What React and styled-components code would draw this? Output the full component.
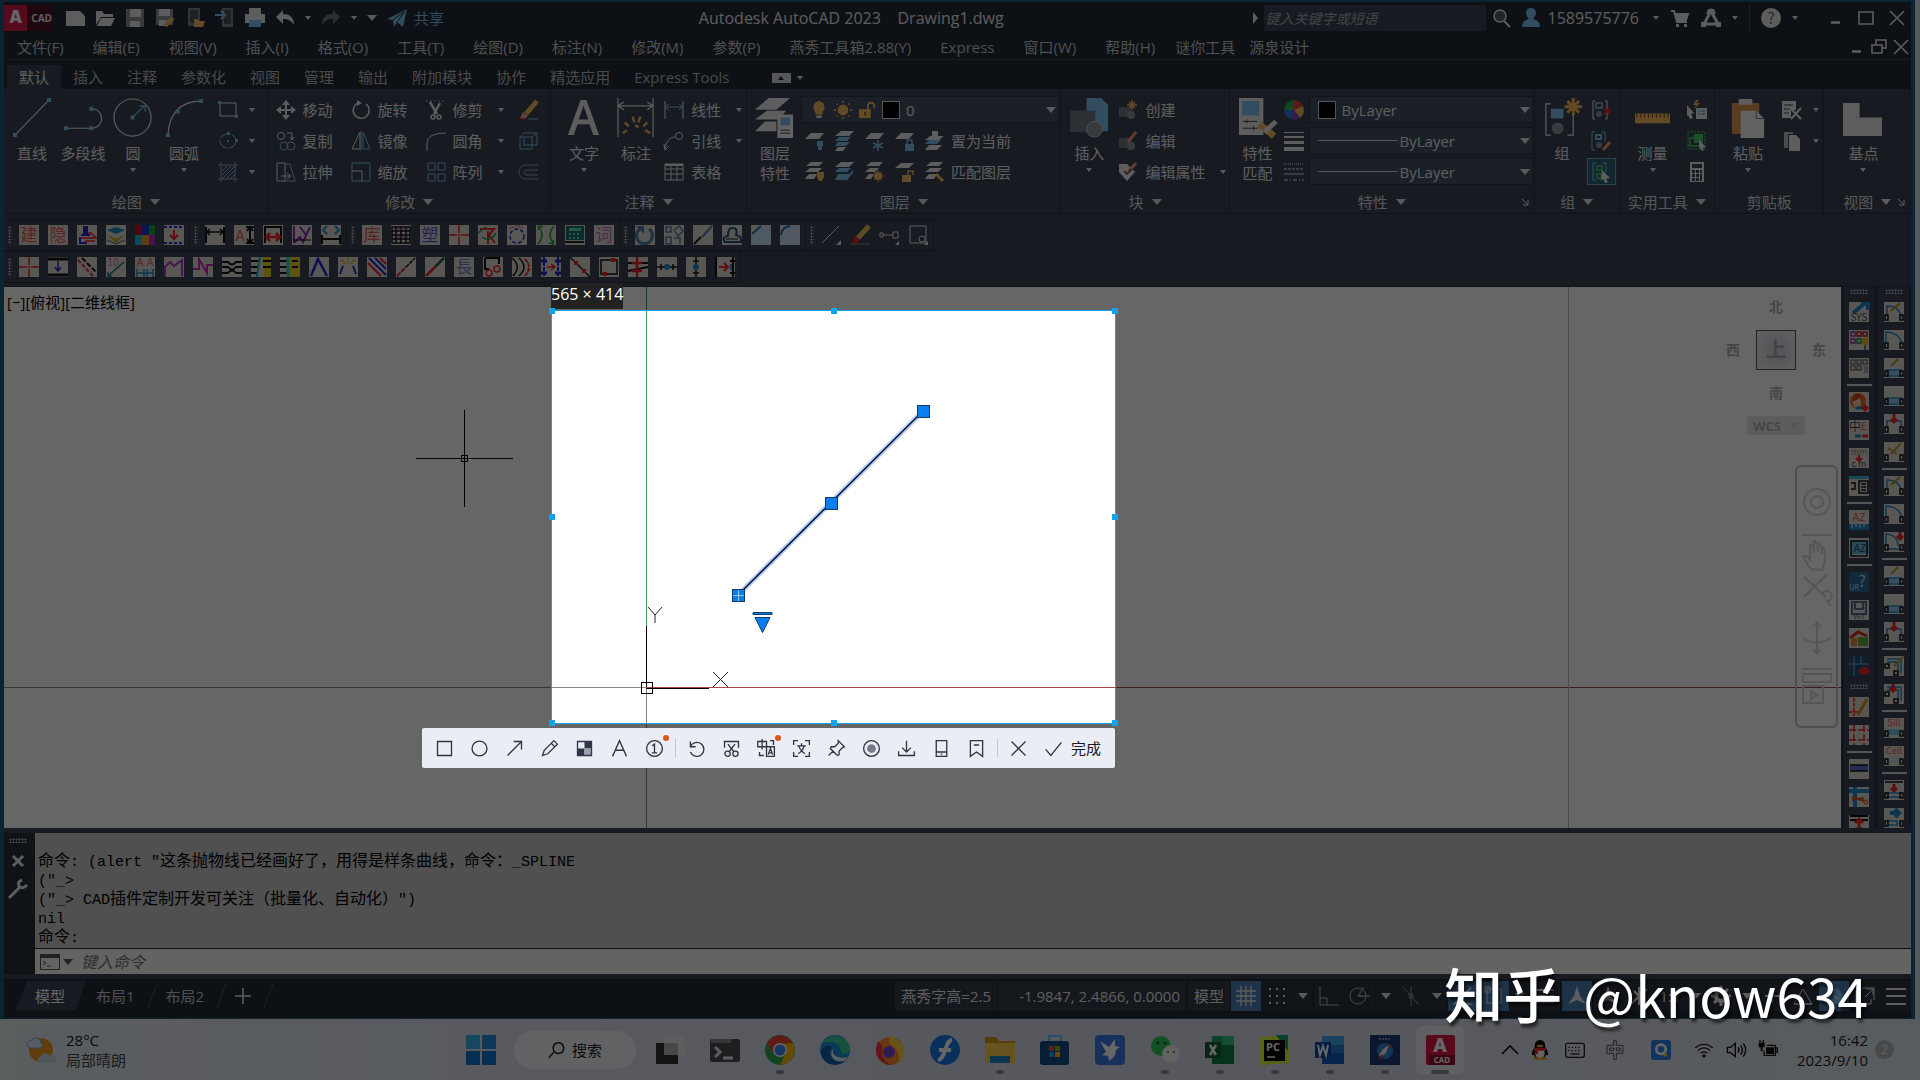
import React from "react";
import styled, { createGlobalStyle, css } from "styled-components";

const W = "#e8e8e8";
const B = "#7cc0ee";
const Y = "#f5b95a";
const R = "#ee2222";
const K = "#111111";
const N = "#2222cc";
const T = "#1e88c8";

// short path helper, most icons are just a few strokes
const P = ({ d, c = W, w = 1, f = "none", dash }) => (
    <path d={d} stroke={c} strokeWidth={w} fill={f} strokeDasharray={dash} />
);
const F = ({ d, c = W }) => <path d={d} fill={c} />;
const Glyph = ({ children, c = R, s = 17, x = 10, y = 16 }) => (
    <text x={x} y={y} fill={c} fillOpacity="0.75" fontSize={s} textAnchor="middle" fontFamily="'Noto Sans CJK SC', sans-serif">{children}</text>
);

const sheet = "M7 2h13l-5 6H1z";

// 20 x 20
const small = {
    newFile: <F d="M1 3h14l5 5v10H1z" />,
    open: <><F d="M1 17V3h6l2 3h9v3H6z" /><F d="M6 10h14l-4 8H2z" /></>,
    save: <><F c="#8d949c" d="M1 1h18v18H1z" /><F d="M5 1h11v8H5zM5 13h10v6H5z" /></>,
    saveAs: <><F c="#8d949c" d="M1 1h17v16H1z" /><F d="M4 1h11v7H4zM4 12h8v6H4z" /><P c={Y} w={4} d="M10 18l8-8" /></>,
    fromMobile: <><F c="#7a8087" d="M3 0h12v18H3z" /><F c="#4d535b" d="M5 2h8v13H5z" /><F c={Y} d="M9 11h4l1 2h6l-2 6H9z" /></>,
    toMobile: <><F c="#7a8087" d="M7 0h11v19H7z" /><F c="#4d535b" d="M9 2h7v14H9z" /><P c={B} w={2} d="M0 7h9M6 3l4 4-4 4" /></>,
    print: <><F d="M4 0h12v6H4zM0 6h20v9H0z" /><F c={B} d="M4 12h12v7H4z" /></>,
    undo: <F d="M8 2v4c6 0 11 3 11 11-3-5-6-6-11-6v5L1 9z" />,
    redo: <F c="#6c747f" d="M12 2v4C6 6 1 9 1 17c3-5 6-6 11-6v5l7-7z" />,
    plane: <><F c={B} d="M0 11L20 1l-4 18-6-5-3 5-1-7z" /><P c="#222933" d="M6 12L18 3l-8 11" /></>,
    search: <><circle cx="8" cy="8" r="6" fill="#555c66" stroke={W} strokeWidth="1.5" /><P w={2} d="M12 13l6 6" /></>,
    person: <F c={B} d="M10 0c4 0 5 3 5 5s-2 5-3 6c4 1 7 3 7 8H1c0-5 3-7 7-8-1-1-3-4-3-6s1-5 5-5z" />,
    cart: <><P w={2} d="M1 3h3l3 11h10M5 6h13l-2 6H7" /><F d="M6 16h3v3H6zM14 16h3v3h-3zM5 6h13l-2 5H7z" /></>,
    autodeskA: <><P w={3} d="M10 3L3 16h14z" /><F d="M7 1h6l2 5H5zM0 14h5v5H0zM15 14h5v5h-5z" /></>,
    help: <><circle cx="10" cy="10" r="10" fill={W} /><Glyph c="#333a45" s={16}>?</Glyph></>,

    rect: <><P d="M2 3h16v13H2z" /><F c={B} d="M0 1h3v3H0zM17 15h3v3h-3z" /></>,
    ellipse: <><ellipse cx="10" cy="10" rx="8" ry="7" fill="none" stroke={B} strokeDasharray="11 2" /><F c={B} d="M9 9h2v2H9zM9 1h3v3H9zM17 8h3v3h-3z" /></>,
    hatch: <><P d="M3 0v20M17 0v20M0 3h20M0 17h20" c="#9aa3ad" /><P c={B} d="M4 9l5-5M4 13l9-9M4 17L17 4M8 17l9-9M12 17l5-5" /></>,
    move: <><P w={2} d="M10 3v14M3 10h14" /><F d="M10 0l4 5H6zM10 20l4-5H6zM0 10l5-4v8zM20 10l-5-4v8z" /></>,
    rotate: <><P w={1.5} d="M7 3a8 8 0 1 0 8 1" /><F d="M6 0l5 3-5 3z" /></>,
    trim: <><P c={B} d="M0 1h20" dash="2 2" /><P w={2.5} d="M4 2l7 12M14 3L8 14" /><circle cx="7" cy="17" r="2" fill="none" stroke={W} strokeWidth="1.5" /><circle cx="13" cy="17" r="2" fill="none" stroke={W} strokeWidth="1.5" /></>,
    erase: <><P c={Y} w={5} d="M19 1L8 14" /><F c="#f2a0a0" d="M5 12l5 4-3 3-5-1z" /><P c={R} d="M0 19h7" /><P c={B} d="M10 19h10" /></>,
    copy: <><circle cx="5" cy="5" r="3.5" fill="none" stroke={W} /><P d="M11 2h5v6M14 6l2 3 2-3" /><circle cx="8" cy="15" r="4" fill="none" stroke={B} /><circle cx="15" cy="15" r="4" fill="none" stroke={B} /></>,
    mirror: <><P d="M9 1v17H1z" /><P c={B} d="M12 1v17h7zM10 0v20" /></>,
    fillet: <P d="M1 20V12Q1 2 20 2" />,
    explode: <><P c={B} d="M2 6h12v12H2zM6 2h13v12h-5M2 6l4-4M14 6l5-4M6 6v8h8" /></>,
    stretch: <><P d="M1 1h8v18H1z" /><P c={B} d="M10 2h4l5 17H9" /><P d="M5 14h9M11 11l4 3-4 3" /></>,
    scale: <><P c={B} d="M1 19V1h18v18z" /><P d="M1 9h10v10" /></>,
    array: <P c={B} d="M2 1h7v7H2zM12 1h7v7h-7zM2 12h7v7H2zM12 12h7v7h-7z" />,
    offset: <P c="#8ea6bd" d="M20 3H8a7 7 0 0 0 0 14h12M20 8H9a2 2 0 0 0 0 5h11" />,
    linear: <><P d="M1 1v18M19 1v18" /><P c={B} d="M1 7h18M5 4L1 7l4 3M15 4l4 3-4 3" /></>,
    leader: <><circle cx="15" cy="5" r="3.5" fill="none" stroke={W} /><P d="M11 6Q3 6 1 18M0 13l1 6 4-4" /></>,
    table: <><P d="M1 2h18v16H1zM1 7h18M1 12h18M7 2v16M13 2v16" /><P w={2} d="M1 3h18" /></>,
    bulb: <><F c={Y} d="M10 0a7 7 0 0 1 4 12v3H6v-3a7 7 0 0 1 4-12z" /><F d="M7 16h6v3H7z" /></>,
    sun: <><circle cx="10" cy="10" r="6" fill={Y} /><P c={Y} w={2} d="M10 0v2M10 18v2M0 10h2M18 10h2M3 3l1 1M16 16l1 1M17 3l-1 1M4 16l-1 1" /></>,
    unlock: <><F c={Y} d="M1 9h13v10H1z" /><P c={Y} w={2} d="M11 9V4a4 4 0 0 1 7 0v4" /><F c="#7a5420" d="M7 12h2v4H7z" /></>,
    layOff: <><F d={sheet} /><F c={B} d="M13 10h6v5h-1v4h-4v-4h-1z" /></>,
    layIso: <><F d="M7 0h13l-5 5H1z" /><F c={B} d="M5 6h12l-4 4H1zM4 11h12l-4 4H1z" /><F d="M4 16h8l-3 4H1z" /></>,
    layFreeze: <><F d={sheet} /><P c={B} w={1.5} d="M14 9v11M9 12l10 5M19 12L9 17" /></>,
    layLock: <><F d={sheet} /><F c={B} d="M11 13h9v7h-9z" /><P c={B} w={1.5} d="M13 13V9h5v4" /></>,
    layCurrent: <><F d="M8 0h6v5h6l-5 4H1l5-4h2z" /><F c={B} d="M5 9h12l-4 4H1z" /><F d="M5 14h13l-5 5H1z" /></>,
    layOn: <><F d="M7 0h12l-4 4H2zM6 6h12l-4 4H1zM5 12h8l-3 5H1z" /><F c={Y} d="M13 10h7v5l-2 4h-3l-2-4z" /></>,
    layUniso: <><F d="M7 0h13l-5 5H1z" /><F c={B} d="M5 6h12l-4 4H1zM4 12h12l-4 6H1z" /><P c={B} w={2} d="M12 18l7-9" /></>,
    layThaw: <><F d="M7 0h12l-4 4H2zM6 6h9l-4 4H1zM5 12h5l-3 5H1z" /><circle cx="14" cy="14" r="4" fill={Y} /><P c={Y} d="M14 8v12M8 14h12M10 10l8 8M18 10l-8 8" /></>,
    layUnlock: <><F d="M7 1h13l-5 5H1z" /><F c={Y} d="M8 13h9v7H8z" /><P c={Y} w={1.5} d="M14 13V9h5v4" /></>,
    layMatch: <><F d="M7 0h12l-4 4H2zM6 6h12l-4 4H1zM5 12h8l-3 5H1z" /><P c={Y} w={3} d="M12 12l7 7" /></>,
    blkNew: <><F c="#6f7781" d="M1 7h12v10H1z" /><circle cx="13" cy="15" r="4" fill="#8d949c" /><P c={Y} w={1.5} d="M14 0v10M9 5h10M11 2l6 6M17 2l-6 6" /></>,
    blkEdit: <><F c="#6f7781" d="M1 7h12v10H1z" /><circle cx="13" cy="15" r="4" fill="#8d949c" /><P c="#f09a70" w={3} d="M10 11l8-10" /></>,
    attEdit: <><F d="M1 2h8l8 8-8 9-8-9z" /><P c="#f09a70" w={3} d="M10 10l8-9" /><P c="#444" w={1.5} d="M6 9l3 3 5-5" /></>,
    wheel: <><F c="#e8442e" d="M10 10V0a10 10 0 0 1 9 6z" /><F c={Y} d="M10 10l9-4a10 10 0 0 1-3 12z" /><F c="#8b44c8" d="M10 10l6 8a10 10 0 0 1-9 1z" /><F c="#2e7be0" d="M10 10L7 19a10 10 0 0 1-7-9z" /><F c="#2fae56" d="M10 10H0A10 10 0 0 1 10 0z" /></>,
    weights: <F d="M0 1h20v1H0zM0 5h20v2H0zM0 10h20v3H0zM0 16h20v4H0z" />,
    types: <><P d="M0 2h20" dash="1 1" /><P d="M0 7h20" dash="3 1" /><P d="M0 12h20" /><P d="M0 18h20" dash="4 2 1 2" /></>,
    ungroup: <><P d="M4 1H2v18h2M14 1h2v18h-2" /><P c={B} w={1.5} d="M5 3h6v5H5z" /><circle cx="8" cy="14" r="3" fill="#8d949c" /><P c={R} w={2} d="M13 8l6 6M19 8l-6 6" /></>,
    groupEdit: <><P c={B} d="M4 1H1v18h3M11 1h3v10" /><P c={B} w={2} d="M5 4h5v4H5z" /><circle cx="8" cy="14" r="3" fill="#8d949c" /><P c="#f09a70" w={3} d="M12 19l7-8" /></>,
    groupSel: <><P c={B} d="M5 1H2v17h3M12 1h3v9" /><P c="#3fca62" w={1.5} d="M6 4h5v4H6z" /><circle cx="8" cy="14" r="2.5" fill="none" stroke="#3fca62" strokeWidth="1.5" /><F d="M11 8l8 8-4 1 2 3-3 1-2-4-2 2z" /></>,
    quickSel: <><F d="M0 5l7 8-3 1 2 4-3 1-2-4-1 1zM9 8h11v11H9z" /><F c={Y} d="M9 0l-3 5h3l-2 4 6-6H9l3-3z" /><P c={T} d="M11 11h2M14 11h4M11 14h2M14 14h4" /></>,
    selAll: <><P c="#3fca62" d="M1 1h17v17H1z" dash="2 1" /><P c="#3fca62" w={1.5} d="M3 7h10v8H3z" /><F c="#3fca62" d="M7 3h9v9H7z" /><F d="M12 9l7 7-3 1 1 3-3-1-2-3z" /></>,
    calc: <><F d="M3 0h14v20H3z" /><F c="#3b4453" d="M5 2h10v4H5zM5 8h3v3H5zM9 8h3v3H9zM13 8h2v3h-2zM5 12h3v3H5zM9 12h3v3H9zM13 12h2v7h-2zM5 16h3v3H5zM9 16h3v3H9z" /></>,
    cut: <><F d="M0 1h14v9H9v8H0z" /><P c="#3b4453" d="M2 5h9M2 9h6M2 13h5" /><P w={2} d="M8 8l11 11M19 8L9 19" /></>,
    copyClip: <><F c="#b9bdc2" d="M2 1h9v16H2z" /><P c="#3b4453" d="M6.5 17V3.500h8" /><F d="M7 4h7l4 4v12H7z" /></>,
};

// 20 x 20 drawings placed on a pale tile
const tile = {
    jian: <Glyph>建</Glyph>,
    yin: <Glyph>隐</Glyph>,
    ding: <><F c={N} d="M6 1h5v8H6zM4 9h9v2H4z" /><P c={R} w={1.5} d="M2 13h17l-5-5h-3M8 16h10" /><P c={N} w={2} d="M3 12v6h7" /></>,
    layers: <><F c={T} d="M1 5l9-3 9 3-9 4z" /><F c="#c9a800" d="M1 10l9 4 9-4-9 8z" /><P c="#555" d="M1 15l9 4 9-4" /></>,
    colors: <><F c="#d41111" d="M0 0h7v10H0z" /><F c="#1638d8" d="M7 0h7v10H7z" /><F c="#12a822" d="M14 0h6v10h-6z" /><F c="#18c4d8" d="M0 10h7v10H0z" /><F c="#e89a28" d="M7 10h7v10H7z" /><F c="#c322c8" d="M14 10h6v10h-6z" /></>,
    dimDown: <><P c={N} w={2} d="M0 2h20M0 18h20" dash="3 2" /><P c={R} w={2} d="M10 5v9M6 10l4 4 4-4" /></>,
    dimH: <><P c={K} w={2} d="M1 2v16M19 2v16" /><P c={K} w={1.5} d="M1 7h18M5 4L2 7l3 3M15 4l3 3-3 3" /></>,
    dimA: <><Glyph x={6} s={15}>A</Glyph><P c={K} w={2} d="M12 2h8M12 18h8M16 3v14M13 6l3-4 3 4M13 14l3 4 3-4" /></>,
    dimR: <><P c={K} w={2} d="M1 2h18M2 2v16M18 2v16" /><P c={R} w={2.5} d="M3 12h14M7 8l-4 4 4 4M13 8l4 4-4 4" /></>,
    dimV: <><P c="#9122b8" w={2} d="M2 1v17M2 18l6-6 3 5 7-15M8 2l6 8" /><P c={K} d="M1 15h18" /></>,
    dimB: <><P c={T} w={2} d="M6 1L2 5l4 4M14 1l4 4-4 4" /><P c={K} w={2} d="M1 10v9M19 10v9M1 14h18" /></>,
    ku: <Glyph>库</Glyph>,
    grid: <><P c={K} w={1.5} d="M1 2h18v16H1zM1 6h18M1 10h18M1 14h18M5 2v16M10 2v16M15 2v16" /><P c="#a32bb4" d="M3 4h14M3 12h14" /></>,
    su: <Glyph c={N}>塑</Glyph>,
    cross: <><P c={R} w={1.5} d="M0 10h20M10 0v20" dash="8 1 2 1" /></>,
    pins: <><P c={R} w={2} d="M2 4h14l-5 6 6 8M10 6v13" /><P c="#2f8b57" w={1.5} d="M0 8l8-6M4 12q8 6 14-4" /></>,
    arcs: <><circle cx="10" cy="11" r="7" fill="none" stroke={N} strokeWidth="1.5" strokeDasharray="4 2" /><P c={R} d="M3 4q7-6 14 0" dash="2 1" /></>,
    swap: <P c="#22a030" w={1.5} d="M2 1q8 9 0 18M18 1q-8 9 0 18M2 5l1-4 4 1M18 15l-1 4-4-1" />,
    calcT: <><F c="#146f62" d="M1 1h18v14H1z" /><F c="#5fd6c1" d="M4 3h12v3H4z" /><P c="#5fd6c1" w={2} d="M4 9h12M4 13h12" dash="2 2" /><F c="#222" d="M0 16h19v2H0z" /></>,
    ci: <Glyph c="#c832c8">词</Glyph>,
    rot: <><P c="#4a7da8" w={3} d="M5 4a8 8 0 1 0 9 0" /><F c="#4a7da8" d="M1 1h8v8z" /></>,
    quad: <><P c="#4a7da8" w={1.5} d="M2 2h5v5H2zM10 5l5-4 4 5-5 5zM2 12h5v7H2zM10 13h6v6" /></>,
    slash: <><P c={K} w={2} d="M1 19l7-7" /><P c="#4a7da8" w={2} d="M9 12L19 1" /></>,
    cloud: <><P c="#1c4f82" w={2} d="M3 17q-4-5 3-6 0-9 5-8 5 0 3 7 6 1 5 7z" /><P c={K} d="M4 14h12" /></>,
    corner: <><F c="#c9ddf2" d="M1 20V9q2-7 9-8h9v19z" /><P c="#1c6fb4" w={2} d="M1 10Q2 2 10 1" /></>,
    corner2: <><F c="#c9ddf2" d="M1 20V9l9-8h9v19z" /><P c="#1c6fb4" w={2} d="M1 9L10 1" /></>,

    bars: <><P c={K} w={3} d="M0 2h20M0 18h20" /><P c={N} w={1.5} d="M10 4v10M7 10l3 4 3-4" /></>,
    dash2: <><P c={R} w={2} d="M1 3l15 16" dash="4 2" /><P c={K} w={2} d="M5 1l14 14" dash="5 2" /></>,
    ten: <><Glyph c="#e02ad0" s={10} x={7} y={9}>10</Glyph><P c="#18786e" w={1.5} d="M2 19L18 5M2 15v4h4" /></>,
    aa: <><Glyph s={11} x={5} y={9}>A</Glyph><Glyph s={11} x={15} y={9}>A</Glyph><P c={T} w={1.5} d="M2 20v-8M9 20v-8M12 20v-8M18 20v-8M2 16h16" /></>,
    peak: <P c="#b032c8" w={2} d="M1 20V10l5-5 4 4 8-6v16" />,
    zig: <P c="#d022b8" w={2} d="M0 12h6V2l8 14V8h6" />,
    waves: <P c={K} w={2} d="M0 5h6q4 5 8 0h6M0 10h6q4 5 8 0h6M0 16h6q4-5 8 0h6" />,
    yell: <><F c="#e8d020" d="M11 0h9v20h-7z" /><P c={K} w={2} d="M0 4h9M0 10h8M0 16h7M12 4h8M12 10h8" /><P c="#26b6d6" w={2} d="M9 0L6 20" /></>,
    cyan: <><F c="#e8d020" d="M10 0h10v20H8z" /><P c={K} w={2} d="M0 4h9M0 10h8M0 16h7M12 4h6M12 10h6" /><P c="#22c8d8" w={3} d="M8 0v20" /></>,
    chev: <P c={N} w={2.5} d="M2 19L9 2l9 17" />,
    rays: <><P c={N} w={2} d="M2 17l3-8M18 17l-3-8" /><P c="#e4b80a" w={2} d="M10 1v5M4 3l3 4M16 3l-3 4" dash="2 1" /></>,
    tri: <><P c={N} w={2} d="M2 1l17 17M8 1l11 11" /><P c={R} w={2} d="M1 6l13 13M13 1l6 6" /></>,
    rk: <><P c={R} w={2} d="M1 19l9-9" dash="5 1" /><P c={K} w={1.5} d="M10 10l9-9" dash="4 1" /></>,
    rk2: <><P c={R} w={2.5} d="M1 19l9-9" /><P c="#205c38" w={2.5} d="M10 10l9-9" /></>,
    chang: <Glyph c="#4a58b8">長</Glyph>,
    hook: <><P c={K} w={2} d="M2 1h14v6M2 1v11h4" /><circle cx="14" cy="12" r="3" fill="none" stroke={R} strokeWidth="1.5" /><circle cx="6" cy="16" r="3" fill="none" stroke={R} strokeWidth="1.5" /></>,
    arc3: <><P c={K} w={1.5} d="M0 1q10 8 1 18M7 1q10 9 0 18" /><P c={R} w={2} d="M13 2q8 8 0 17" dash="4 1" /></>,
    walls: <><P c={N} w={2} d="M3 0v20M17 0v20" dash="4 1" /><P c={N} w={3} d="M0 4h6M0 16h6M14 4h6M14 16h6" /><P c={R} w={1.5} d="M6 10h7M10 7l4 3-4 3" /></>,
    back: <><P c={K} w={1.5} d="M0 0l20 20" /><F c={R} d="M4 4h4v4H4zM12 12h4v4h-4z" /></>,
    box: <><P c={K} w={1.5} d="M2 3h16v14H2z" /><F c={R} d="M12 1h4v4h-4zM4 15h4v4H4z" /></>,
    hash: <><P c={K} w={2} d="M0 6h20M0 14l20-4" /><P c={R} w={2.5} d="M9 0v20M4 6h10M4 14h10" /></>,
    midH: <><P c={K} w={1.5} d="M0 10h20M4 7v6M16 7v6" /><circle cx="10" cy="10" r="3" fill={T} /></>,
    midV: <><P c={K} w={1.5} d="M10 0v20M7 4h6M7 16h6" /><circle cx="10" cy="10" r="3" fill={T} /></>,
    wallTo: <><P c={K} w={2} d="M1 0v20M18 0v20M15 4h5M15 16h5" /><P c={R} w={2} d="M4 10h8M9 6l4 4-4 4" /><P c={T} w={2} d="M16 7v6" /></>,

    sys: <><P c={T} w={4} d="M4 11L15 2M12 2h7v6" /><Glyph c={K} s={10} y={19}>SYS</Glyph></>,
    cells: <><P c="#8a3ab0" w={1.5} d="M2 2h4v4H2zM2 9h4v4H2z" /><P c="#b02030" w={1.5} d="M8 2h4v4H8zM14 2h4v4h-4z" /><P c="#2a8a50" w={1.5} d="M8 9h4v4H8z" /><F c="#e6b41a" d="M13 8h6v7h-5z" /><P c={K} d="M16 15v5" /></>,
    cells2: <><P c="#777" w={1.5} d="M2 2h4v4H2zM2 8h4v4H2zM8 2h4v4H8zM14 2h4v4h-4zM8 8h4v4H8z" /><F c="#9aa" d="M14 8h5v7h-4z" /></>,
    face: <><circle cx="9" cy="9" r="8" fill="#e66a2a" /><ellipse cx="8" cy="11" rx="4" ry="5" fill="#f6d3b0" /><F c="#c8401a" d="M4 9q5 0 6-5 3 2 2 6 3-6-3-8-6 0-5 7z" /><P c={T} w={3} d="M7 16h6" /><P c={R} w={3} d="M13 16h5M15 13l3 3-3 3" /></>,
    zhongE: <><Glyph c={K} s={12} x={6} y={11}>中</Glyph><Glyph s={11} x={15} y={10}>E</Glyph><P c={T} w={3} d="M6 16h6" /><P c={R} w={3} d="M13 16h6" /></>,
    mmcm: <><Glyph c="#665" s={9} y={7}>mm</Glyph><Glyph c={K} s={9} y={19}>c m</Glyph><P c={R} w={2} d="M10 7v6M7 10l3 3 3-3" /></>,
    doc: <><F c="#38b6e0" d="M0 0h20v3H0z" /><P c={K} w={1.5} d="M10 5h9v12h-9zM12 8h5M12 11h5M12 14h5M2 7h4v6H2" /></>,
    az: <><Glyph s={11} y={11}>AZ</Glyph><F c={T} d="M0 14h20v6H0z" /><P c="#fff" d="M3 14v4M7 14v3M11 14v4M15 14v3" /></>,
    az2: <><F c="#5fbbe4" d="M2 2h18v14H2z" /><P c={K} w={1.5} d="M2 18h16V3H2z" /><Glyph c={K} s={10} x={11} y={14}>AZ</Glyph></>,
    ask: <><F c="#2a6894" d="M0 0h20v20H0z" /><Glyph c="#fff" s={16} x={13} y={15}>?</Glyph><Glyph c="#fff" s={7} x={5} y={18}>UR</Glyph></>,
    disk: <><P c="#4a6d92" w={2} d="M3 2h14v12H3zM6 2v7h8V2" /><Glyph c="#24405f" s={8} y={19}>Ver</Glyph></>,
    roof: <><P c="#d0301c" w={3} d="M1 10l8-6 9 4" /><F c="#5da73a" d="M9 9h10v9H9z" /><F c="#e08a42" d="M2 10h6v8H2z" /></>,
    plan: <><F c="#274d70" d="M0 0h20v20H0z" /><P c="#7fb0da" d="M5 0v20M0 8h20M12 0v8" /><F c={R} d="M12 11h6v8h-6zM10 13h10v4H10z" /></>,
    crossP: <><P c={R} w={1.5} d="M5 1v18M0 15h10" dash="4 1" /><P c="#c9981a" w={3} d="M9 18L18 2" /></>,
    cross4: <P c={R} w={1.5} d="M5 0v20M15 0v20M0 5h20M0 15h20" dash="7 2" />,
    band: <><F c="#5a6cd0" d="M1 6h18v6H1z" /><P c={K} w={1.5} d="M1 6h18M1 12h18" /></>,
    scis: <><P c={T} w={4} d="M0 4h20M6 0v20" /><P c="#d4501c" w={2} d="M3 13l12-2M3 10l12 4" /><circle cx="17" cy="15" r="2" fill="none" stroke="#d4501c" /></>,
    upDown: <><P c={K} w={2} d="M1 1h18M1 5h18" /><P c={R} w={3} d="M10 4v12M6 8l4-4 4 4M6 13l4 4 4-4" /></>,
};

const feet = <><P c={K} w={1.5} d="M1 13h3v5H1zM16 13h3v5h-3z" /></>;
const dock = {
    doorWand: <><P c={T} w={1.5} d="M3 14V4q12 0 14 10" /><P c="#b8901a" w={2} d="M7 9l9-8" />{feet}</>,
    door: <><P c={T} w={1.5} d="M2 14V2q14 1 16 12" />{feet}</>,
    winWand: <><F c="#8cc4e8" d="M2 13h16v4H2z" /><P c={T} w={1.5} d="M2 12h16M2 18h16" /><P c="#b8901a" w={2} d="M7 8l7-7" />{feet}</>,
    win: <><F c="#8cc4e8" d="M2 13h16v4H2z" /><P c={T} w={1.5} d="M2 12h16M2 18h16" />{feet}</>,
    bayRed: <><P c={T} w={1.5} d="M3 14V7h14v7" /><P c={R} w={3} d="M10 0v6M7 5l3 3 3-3" />{feet}</>,
    open: <><P c="#b8901a" w={2} d="M7 12l10-11M4 6l9 6" />{feet}</>,
    doorRed: <><P c={T} w={1.5} d="M2 14V2q12 1 12 12M4 17h12" /><P c={R} w={3} d="M16 0v5M13 4l3 3 3-3" />{feet}</>,
    bent: <><P c={T} w={1.5} d="M3 3h14v14M3 6h11v11" /><P c="#b8901a" w={2} d="M10 10l9-9" /><P c={K} w={1.5} d="M1 8h4v4H1zM10 15h4v4h-4z" /></>,
    bentRed: <><P c={T} w={1.5} d="M3 3h14v14M3 6h11v11" /><P c={R} w={3} d="M9 0v6M6 4l3 3 3-3" /><P c={K} w={1.5} d="M1 8h4v4H1zM10 15h4v4h-4z" /></>,
    sill: <><Glyph s={9} y={8}>Sill</Glyph><F c="#6cc2de" d="M5 11h10v6H5z" />{feet}</>,
    ceil: <><Glyph s={9} y={8}>Ceil</Glyph><F c="#bcd8dc" d="M5 11h10v6H5z" />{feet}</>,
    winRed: <><P c={K} w={1.5} d="M1 2h18" /><P c={R} w={3} d="M10 4v6M7 8l3 3 3-3" /><P c={T} w={1.5} d="M2 13h16M2 17h16" />{feet}</>,
    winNext: <><P c={T} w={4} d="M6 5h7M11 1l4 4-4 4" /><P c={T} w={1.5} d="M4 13h9v4H4" />{feet}</>,
};

// 40 x 40
const large = {
    line: <><P d="M3 38L38 2" w={1.2} /><F c={B} d="M1 36h4v4H1zM36 0h4v4h-4z" /></>,
    pline: <><P d="M3 31h26c14 0 14-20 0-20" w={1.2} /><F c={B} d="M1 29h4v4H1zM27 29h4v4h-4zM27 9h4v4h-4z" /></>,
    circle: <><circle cx="20" cy="20" r="19" fill="none" stroke={W} strokeWidth="1.2" /><P c={B} d="M20 20L32 8M27 8h6v6" w={1.2} /><F c={B} d="M18 18h4v4h-4z" /></>,
    arc: <><P d="M4 38Q6 4 38 3" w={1.2} /><F c={B} d="M2 36h4v4H2zM12 12h4v4h-4zM36 1h4v4h-4z" /></>,
    text: <F d="M17 2h6l13 36h-6l-4-11H14l-4 11H4zM20 8l-5 14h10z" />,
    dim: <><P d="M2 0v40M38 0v40M2 8h36M8 4L2 8l6 4M32 4l6 4-6 4" w={1.2} /><P c={Y} w={2.5} d="M7 36l4-3M9 25l4 4M17 19l2 6M25 19l-2 6M32 25l-4 4M35 36l-5-3M20 28l3 2" /></>,
    layerProps: <><F d="M14 0h22L22 12H0zM12 13h20l-8 9H0zM10 24h12v10H0z" /><F c="#f4f4f4" d="M23 17h16v24H23z" /><F c={B} d="M26 20h10v8H26z" /><P c="#444" d="M26 33h10M26 36h10" /></>,
    insert: <><F c={B} d="M18 0h15l7 7v27H18z" /><F c="#6f7781" d="M1 13h26v22H1z" /><circle cx="26" cy="32" r="8" fill="#8d949c" stroke="#c5c9ce" /></>,
    matchProps: <><F d="M1 0h25v38H1z" /><F c={B} d="M4 3h18v15H4z" /><P c="#444" d="M5 24h15M5 31h15M9 22v4M16 29v4" /><P c={Y} w={7} d="M22 27l15 12" /><P w={5} d="M27 35l12-11" /></>,
    group: <><P d="M9 6H4v32h5M26 6h6v32h-6" w={1.2} /><F c={B} d="M9 11h13v10H9z" /><circle cx="16" cy="31" r="6" fill="#8d949c" /><P c={Y} w={3} d="M32 0v18M23 9h18M26 3l12 12M38 3L26 15" /></>,
    ruler: <><F c={Y} d="M2 16h36v10H2z" /><P c="#5a4020" d="M4 16v4M8 16v4M12 16v4M16 16v4M20 16v4M24 16v4M28 16v4M32 16v4M36 16v4" /></>,
    paste: <><F c="#d9984a" d="M4 5h28v32H4z" /><F d="M11 1h14v6H11z" /><F c="#f4f4f4" d="M13 13h16l8 8v20H13z" /><P c="#777" d="M29 13v8h8" /></>,
    base: <F d="M0 5h17v15h23v19H0z" />,
};

// 20 x 20, status bar
const status = {
    grid: <P d="M5 0v20M10 0v20M15 0v20M0 5h20M0 10h20M0 15h20" w={1.3} />,
    snap: <P d="M2 3h17M2 10h17M2 17h17" w={2} dash="2 5" />,
    ortho: <P d="M1 0v19h19M1 12h7v7" c="#b4b8be" />,
    polar: <><circle cx="8" cy="10" r="8" fill="none" stroke="#b4b8be" /><P c="#b4b8be" d="M8 10h12M8 10l6-9M8 10h5" /></>,
    iso: <P c="#8d949c" d="M10 0v20M2 1l16 18M8 8h4v4H8z" />,
    track: <><P d="M1 18L18 2M4 18h15" w={1.5} /></>,
    osnap: <P d="M3 3h14v14H3zM1 1h5v5H1z" />,
    weight: <P d="M1 4h18M1 10h18M1 16h18" w={2} />,
    person: <F d="M10 0l3 10 6 8-9-4-9 4 6-8z" />,
    star: <P d="M10 1v18M2 18L18 3M5 5l10 10" w={2} />,
    gear: <><circle cx="10" cy="10" r="5" fill="none" stroke={W} strokeWidth="4" /><P d="M10 0v4M10 16v4M0 10h4M16 10h4M3 3l3 3M14 14l3 3M17 3l-3 3M3 17l3-3" w={3} /></>,
    plus: <P d="M10 3v14M3 10h14" w={2} />,
    angle: <P d="M1 18L10 3l9 15zM1 18h18" />,
    disc: <><circle cx="10" cy="10" r="8" fill={B} /><P d="M10 4v6l5 3" c="#fff" /></>,
    full: <P d="M1 4v14h15v-5M7 2h12v12M18 3l-8 8M12 3h6v6" />,
    menu: <P d="M0 3h20M0 10h20M0 18h20" w={2} />,
};

// 24 x 24, capture toolbar
const snip = {
    rect: <path d="M4 4h16v16H4z" />,
    oval: <circle cx="12" cy="12" r="8.5" />,
    arrow: <path d="M4 20L20 4M11 4h9v9" />,
    pencil: <path d="M4 20l2-6L17 3l4 4L10 18zM14 6l4 4M4 20l6-2" />,
    mosaic: <><path d="M4 12h8v8H4z" fill="#303545" stroke="none" /><path d="M12 4h8v8h-8z" fill="#303545" stroke="none" /><path d="M12 12h8v8h-8z" fill="#9ca0ac" stroke="none" /><path d="M4 4h16v16H4z" /></>,
    text: <path d="M4 21L12 3l8 18M7 14h10" />,
    number: <><circle cx="12" cy="12" r="9" /><path d="M9.500 9L12 7v10M9 17h6" /></>,
    undo: <path d="M5 4v6h6M5 10a8 8 0 1 1 0 6" />,
    cut: <><path d="M4 11V4h16v7M8 7l7 9M16 7l-7 9" /><circle cx="7.500" cy="18" r="3" /><circle cx="16.500" cy="18" r="3" /></>,
    translate: <><path d="M2 4h10v6H2zM7 1v12M12 10h9v11h-9zM14 19l2.500-7 2.500 7M15 17h3M4 16v4h5M16 3h4v5" /></>,
    ocr: <path d="M3 8V3h5M16 3h5v5M21 16v5h-5M8 21H3v-5M7 9h10M12 6v3M8 18c4-2 6-5 7-9M9 9c1 4 4 7 7 9" />,
    pin: <path d="M14 3l7 7-2 1-4 4 0 4-2 1-8-8 1-2h4l4-4zM8 15l-5 5" />,
    record: <><circle cx="12" cy="12" r="9" /><circle cx="12" cy="12" r="5" fill="#777b88" stroke="none" /></>,
    save: <path d="M12 3v13M7 11l5 5 5-5M3 15v5h18v-5" />,
    phone: <path d="M6 3h12v18H6zM6 16h12M11 18.500h2" />,
    mark: <path d="M5 3h14v18l-7-5-7 5zM9 8h6" />,
    close: <path d="M4 4l16 16M20 4L4 20" />,
    done: <path d="M3 13l6 7L21 5" />,
};

// 30 x 30
const apps = {
    start: <><F c="#35b3ea" d="M0 0h14v14H0z" /><F c="#2090e0" d="M16 0h14v14H16z" /><F c="#0a74cf" d="M0 16h14v14H0zM16 16h14v14H16z" /></>,
    views: <><F c="#333" d="M1 8h22v21H1z" /><F c="rgba(235,235,230,.7)" d="M9 1h21v19H9z" /></>,
    terminal: <><rect y="4" width="30" height="23" rx="2" fill="#4d4d50" /><F c="#8b8b90" d="M1 4h20v4H1z" /><P w={3} d="M5 12l5 5-5 5M13 23h10" /></>,
    chrome: <><circle cx="15" cy="15" r="15" fill="#33a852" /><F c="#ea4335" d="M2 8A15 15 0 0 1 28 8L15 9 8 18z" /><F c="#fbbc05" d="M28 8a15 15 0 0 1-13 22l6-12-4-9z" /><circle cx="15" cy="15" r="7" fill="#fff" /><circle cx="15" cy="15" r="5.500" fill="#4285f4" /></>,
    edge: <><circle cx="15" cy="15" r="15" fill="#1a8fd6" /><F c="#3dcb9c" d="M2 9C8-3 29-1 30 14c0 6-9 6-9 3 0-11-13-12-19-8z" /><F c="#125ba6" d="M12 12c-6 7 0 18 13 14-6 6-22 6-24-9 1-5 6-8 11-5z" /><F c="#e7f1fa" d="M14 13c-4 6 3 12 14 9l-4 4c-11 2-16-7-10-13z" /></>,
    firefox: <><circle cx="15" cy="16" r="14" fill="#ff8a2a" /><F c="#ffd23e" d="M16 0c7 5 15 9 13 20-2 6-6 8-6 8 3-12-3-14-7-18-3-3-2-8 0-10z" /><F c="#f0394a" d="M1 14c0 12 10 16 17 16C8 28 6 20 7 10l-4-4z" /><circle cx="14" cy="17" r="6" fill="#7b45d8" /></>,
    flash: <><circle cx="15" cy="15" r="15" fill="#1479e4" /><P c="#fff" w={4} d="M22 5c-7 0-6 19-14 20M9 15h12" /></>,
    folder: <><F c="#d99a1a" d="M0 2h11l3 4h16v10H0z" /><F c="#ffcf4a" d="M0 8h30v20H0z" /><F c="#1d82c4" d="M5 21h20v7H5z" /></>,
    store: <><P c="#58c4f4" w={2} d="M9 6V1h12v5" /><rect y="6" width="29" height="24" rx="3" fill="#154d86" /><F c="#f25022" d="M9 11h5v5H9z" /><F c="#7fba00" d="M15 11h5v5h-5z" /><F c="#00a4ef" d="M9 17h5v5H9z" /><F c="#ffb900" d="M15 17h5v5h-5z" /></>,
    bird: <><rect width="30" height="30" rx="4" fill="#3d79e6" /><F c="#fff" d="M5 6l9 6 6-8 0 7 5 1-4 3c0 7-5 9-7 11l-1-5-6-1 4-3z" /></>,
    wechat: <><circle cx="11" cy="11" r="10" fill="#2dc75c" /><circle cx="21" cy="19" r="9" fill="#f1f4f1" /><circle cx="8" cy="8" r="1.500" fill="#115c28" /><circle cx="15" cy="8" r="1.500" fill="#115c28" /><circle cx="18" cy="17" r="1" fill="#666" /><circle cx="24" cy="17" r="1" fill="#666" /></>,
    excel: <><F c="#21a366" d="M7 1h22v28H7z" /><F c="#107c41" d="M7 10h22v19H7z" /><F c="#33c481" d="M18 1h11v9H18z" /><F c="#185c37" d="M0 7h16v16H0z" /><P c="#fff" w={2.5} d="M5 10l6 10M11 10L5 20" /></>,
    pycharm: <><F c="#d6f536" d="M0 2L28 0l2 28-30 2z" /><F c="#16a36c" d="M16 0h12v16z" /><F c="#080808" d="M4 5h21v21H4z" /><text x="6" y="16" fontSize="11" fontWeight="700" fill="#fff" fontFamily="Open Sans, sans-serif">PC</text><P c="#fff" w={1.5} d="M7 22h8" /></>,
    word: <><F c="#41a5ee" d="M7 1h22v9H7z" /><F c="#2b7cd3" d="M7 10h22v8H7z" /><F c="#185abd" d="M7 18h22v11H7z" /><F c="#154a9e" d="M0 7h16v16H0z" /><P c="#fff" w={2} d="M3 10l2 10 3-9 3 9 2-10" /></>,
    rocket: <><F c="#1b3a70" d="M0 0h30v30H0z" /><circle cx="15" cy="16" r="8" fill="#2e86d0" /><F c="#f2f2f2" d="M19 10l-3 8-5 4-2-2 4-6z" /><F c="#e4503a" d="M11 19l3 2-5 4zM17 9l4 1-2 4z" /><P c="#dde" d="M9 4h12" dash="2 1" /></>,
    acad: <><rect x="1" width="29" height="30" rx="2" fill="#e01745" /><F c="#8e0f2c" d="M4 20h26v10H4z" /><F c="#fff" d="M13 3h4l5 14h-4l-1-3h-4l-1 3H8zM15 7l-1 4h2z" /><text x="17" y="28" textAnchor="middle" fontSize="8" fontWeight="700" fill="#fff" fontFamily="Open Sans, sans-serif">CAD</text></>,
    search: <P c="#222" w={2.5} d="M11 19L3 28M19 3a9 9 0 1 0 .1 0z" />,
    weather: <><circle cx="15" cy="15" r="12" fill="#f29a1f" /><path d="M1 11a5 5 0 0 1 5-6 5 5 0 0 1 9 3 3 3 0 0 1 0 5H3z" fill="#dbe8f6" stroke="#7da7d8" /><F c="#c9d6ec" d="M13 28a4 4 0 0 1 2-7 5 5 0 0 1 9 0 4 4 0 0 1 4 7z" /></>,
    up: <P c="#111" w={2.5} d="M3 21L15 9l12 12" />,
    qq: <><F c="#111" d="M15 0c7 0 8 6 8 11 3 4 5 8 4 12l-3-1c-1 4-4 6-9 6s-8-2-9-6l-3 1c-1-4 1-8 4-12C7 6 8 0 15 0z" /><ellipse cx="15" cy="20" rx="7" ry="8" fill="#fff" /><F c="#e62b2b" d="M6 12h18v4H6zM8 15h4v6H8z" /><ellipse cx="15" cy="9" rx="5" ry="2" fill="#f5a11c" /><F c="#f5a11c" d="M5 26h9v4H5zM16 26h9v4h-9z" /></>,
    keyboard: <><rect x="1" y="5" width="28" height="21" rx="3" fill="none" stroke="#222" strokeWidth="2" /><P c="#222" w={2} d="M5 11h20M5 16h20" dash="2 3" /><P c="#222" w={2} d="M8 21h14" /></>,
    ime: <P c="#555" w={1.5} d="M13 1h4v7h10v12H17v9h-4v-9H3V8h10zM7 12h6v4H7zM17 12h6v4h-6z" />,
    qApp: <><rect width="30" height="30" rx="5" fill="#2c80e8" /><circle cx="15" cy="14" r="7" fill="none" stroke="#fff" strokeWidth="4" /><circle cx="21" cy="22" r="3" fill="#ffd12e" /></>,
    wifi: <><P c="#111" w={2} d="M2 12a18 18 0 0 1 26 0M6 16a12 12 0 0 1 18 0M10 20a7 7 0 0 1 10 0" /><circle cx="15" cy="24" r="2.500" fill="#111" /></>,
    volume: <P c="#111" w={2} d="M2 11h5l7-6v20l-7-6H2zM18 11q3 4 0 8M22 8q5 7 0 14M26 5q7 10 0 20" />,
    battery: <><P c="#111" w={2} d="M13 8h13v15H9v-7M27 12h2v6h-2" /><F c="#111" d="M12 11h12v10H12zM1 4h9v7H7v6H4v-6H1zM2 0h2v4H2zM7 0h2v4H7z" /></>,
};

const Svg = ({ set, name, size = 20, box = 20 }) => (
    <svg width={size} height={size} viewBox={`0 0 ${box} ${box}`} aria-hidden="true">{set[name]}</svg>
);

const GlobalStyle = createGlobalStyle`
    * { box-sizing: border-box; }
    body {
        margin: 0;
        overflow: hidden;
        background: #d4e0ea;
        color: #e8e8e8;
        font: 15px/20px "Open Sans", "Noto Sans CJK SC", sans-serif;
    }
    button, input, select {
        padding: 0;
        border: 0;
        background: none;
        color: inherit;
        font: inherit;
    }
    input, select { outline: none; min-width: 0; }
    svg { display: block; flex: none; overflow: visible; }
`;

const Desktop = styled.div`
    display: flex;
    flex-direction: column;
    height: 100vh;
`;

const AppWindow = styled.main`
    flex: 1;
    min-height: 0;
    display: flex;
    flex-direction: column;
    margin-right: 5px;
    border: solid #1c5a7a;
    border-width: 2px 4px 1px;
    background: #3b4453;
`;

const Caret = styled.i`
    flex: none;
    width: 0;
    height: 0;
    border: solid transparent;
    border-width: ${(p) => (p.$big ? "6px 5px 0" : "4px 3px 0")};
    border-top-color: #e0e0e0;
`;

/* ---- title, menus ---- */

const TitleBar = styled.header`
    display: flex;
    align-items: center;
    height: 32px;
    padding-right: 6px;
    background: #222933;
`;

const Logo = styled.div`
    display: flex;
    align-items: center;
    height: 26px;
    width: 48px;
    margin-right: 13px;
    background: #4e1226;
    font-size: 10px;
    font-weight: 700;
    b {
        width: 24px;
        height: 26px;
        margin-right: 4px;
        background: #d81b46;
        color: #fff;
        font-size: 17px;
        line-height: 24px;
        text-align: center;
    }
`;

const QuickBar = styled.nav`
    display: flex;
    align-items: center;
    gap: 10px;
`;

const IconButton = styled.button`
    display: flex;
    align-items: center;
    justify-content: center;
    gap: 7px;
`;

const ShareButton = styled(IconButton)`
    color: #7cc0ee;
`;

const WindowTitle = styled.h1`
    flex: 1;
    margin: 0;
    padding-left: 6px;
    font-size: 16px;
    font-weight: 400;
    text-align: center;
    white-space: pre;
`;

const TitleRight = styled.div`
    display: flex;
    align-items: center;
    gap: 11px;
    margin-right: 14px;
`;

const SearchGroup = styled.div`
    display: flex;
    align-items: center;
    gap: 6px;
    margin-right: -2px;
`;

const Account = styled(IconButton)`
    margin-right: 3px;
    font-size: 16px;
`;

const HelpSearch = styled.input`
    width: 222px;
    height: 26px;
    padding: 0 2px;
    background: #3b4453;
    font-size: 14px;
    font-style: italic;
    &::placeholder { color: #a4a8ae; opacity: 1; }
`;

const Rule = styled.i`
    width: 1px;
    height: 28px;
    background: #4a5360;
`;

const WinButtons = styled.div`
    display: flex;
    align-items: center;
    gap: ${(p) => p.$gap}px;
    margin-left: auto;
`;

const MenuBar = styled.nav`
    display: flex;
    align-items: center;
    gap: 29px;
    height: 26px;
    padding: 0 2px 0 13px;
    background: #222933;
    border-bottom: 1px solid #38404c;
    color: #c2c5ca;
    button { white-space: nowrap; }
`;

const ExtraMenus = styled.div`
    display: flex;
    gap: 14px;
    margin-left: -9px;
`;

const RibbonTabs = styled.nav`
    display: flex;
    align-items: flex-end;
    height: 29px;
    padding-left: 3px;
    background: #222933;
    color: #b4b8be;
`;

const RibbonTab = styled.button`
    height: 24px;
    padding: 0 12px;
    white-space: nowrap;
    ${(p) => p.$on && css`
        background: #3b4453;
        color: #f0f0f0;
    `}
`;

const RibbonToggle = styled.button`
    display: flex;
    align-items: center;
    gap: 6px;
    height: 22px;
    margin-left: 30px;
    i:first-child {
        display: flex;
        align-items: center;
        justify-content: center;
        width: 19px;
        height: 10px;
        background: #dadada;
    }
`;

/* ---- ribbon ---- */

const Ribbon = styled.div`
    display: flex;
    height: 125px;
    border-bottom: 1px solid #262d38;
`;

const PanelBox = styled.section`
    flex: ${(p) => p.$size} 1 0;
    min-width: 0;
    display: flex;
    flex-direction: column;
    border-right: 1px solid #2a313c;
`;

const PanelBody = styled.div`
    display: flex;
    height: 98px;
    padding: 5px 0 0 ${(p) => p.$pad || 6}px;
    white-space: nowrap;
`;

const PanelTitle = styled.button`
    position: relative;
    flex: 1;
    display: flex;
    align-items: center;
    justify-content: center;
    gap: 8px;
    padding-top: 4px;
    color: #d6d8db;
    svg {
        position: absolute;
        right: 5px;
    }
`;

const BigButton = styled.button`
    flex: none;
    display: flex;
    flex-direction: column;
    align-items: center;
    align-self: flex-start;
    width: ${(p) => p.$w || 52}px;
    padding-top: 4px;
    svg { margin-bottom: 5px; }
    i { margin-top: 5px; }
`;

const Col = styled.div`
    flex: none;
    display: flex;
    flex-direction: column;
    width: ${(p) => p.$w}px;
    padding-left: ${(p) => p.$pad || 0}px;
`;

const Line = styled.div`
    display: flex;
    align-items: center;
    gap: 10px;
    height: 31px;
    padding-left: 3px;
`;

const SmallButton = styled.button`
    display: flex;
    align-items: center;
    gap: 7px;
    height: 31px;
    i { margin-left: ${(p) => (p.$bare ? 4 : 8)}px; }
`;

const PickButton = styled(SmallButton)`
    justify-content: center;
    width: 29px;
    height: 27px;
    margin: 2px 0;
    ${(p) => p.$on && css`
        background: #2f6079;
        box-shadow: inset 0 0 0 1px #6fa9c4;
    `}
`;

const Combo = styled.label`
    display: flex;
    align-items: center;
    gap: 6px;
    height: 27px;
    width: ${(p) => p.$w}px;
    margin: 2px 0;
    padding: 0 2px 0 8px;
    background: #454f61;
    border: 1px solid #2c333e;
    select {
        flex: 1;
        appearance: none;
    }
    option { color: #222; }
`;

const Swatch = styled.i`
    width: 18px;
    height: 18px;
    background: #000;
    border: 1px solid #d8d8d8;
`;

const Stroke = styled.i`
    width: 80px;
    height: 1px;
    margin-right: -4px;
    background: #d8d8d8;
`;

/* ---- icon toolbars ---- */

const ToolArea = styled.div`
    padding: 5px 0 3px;
    border-bottom: 1px solid #2a313c;
`;

const ToolRow = styled.div`
    display: flex;
    height: 32px;
`;

const ToolGroup = styled.div`
    display: flex;
    align-items: center;
    gap: 9px;
    padding: 0 5px 0 4px;
    border: solid #2a313c;
    border-width: 1px 1px 1px 0;
`;

const Grip = styled.i`
    flex: none;
    width: ${(p) => (p.$flat ? 18 : 4)}px;
    height: ${(p) => (p.$flat ? 5 : 18)}px;
    margin-right: ${(p) => (p.$flat ? 0 : -2)}px;
    background: radial-gradient(circle, #a8adb5 40%, transparent 60%) 0 0 / 3px 3px;
`;

const Tile = styled.button`
    flex: none;
    width: 20px;
    height: 20px;
    background: ${(p) => (p.$plain ? "none" : "#dcdad2")};
`;

const Workspace = styled.div`
    flex: 1;
    min-height: 0;
    display: flex;
`;

const Canvas = styled.section`
    position: relative;
    flex: 1;
    background: #fff;
    color: #000;
`;

const Sketch = styled.svg`
    position: absolute;
    inset: 0;
    width: 100%;
    height: 100%;
    overflow: hidden;
`;

const ViewLabel = styled.div`
    position: absolute;
    top: 5px;
    left: 3px;
`;

const ViewCube = styled.div`
    position: absolute;
    top: 10px;
    right: 12px;
    display: grid;
    grid-template-columns: 20px 50px 20px;
    grid-template-rows: 20px 66px 20px 32px;
    column-gap: 8px;
    place-items: center;
    width: 106px;
    color: #b0b0b0;
    font-weight: 700;
    font-size: 14px;
    > :nth-child(1), > :nth-child(5), > :nth-child(6) { grid-column: 1 / 4; }
`;

const CubeFace = styled.button`
    width: 40px;
    height: 40px;
    border: 1px solid #555;
    background: radial-gradient(#d4dae2 30%, #f2f2f2);
    color: #a8a8a8;
    font-size: 20px;
`;

const Wcs = styled.button`
    align-self: end;
    display: flex;
    align-items: center;
    gap: 8px;
    height: 19px;
    padding: 0 6px;
    background: #e8e8ec;
    color: #b0b0b0;
    font-size: 13px;
    font-weight: 700;
    i { border-top-color: #d4d4d4; }
`;

const NavBar = styled.div`
    position: absolute;
    top: 178px;
    right: 3px;
    display: flex;
    flex-direction: column;
    align-items: center;
    justify-content: space-evenly;
    width: 43px;
    height: 263px;
    border: 2px solid #c4c4c4;
    border-radius: 6px;
`;

const DockCol = styled.div`
    display: flex;
    flex-direction: column;
    align-items: center;
    gap: 8px;
    width: 34px;
    padding-top: 2px;
    overflow: hidden;
    border: solid #1f2630;
    border-width: 0 1px;
    margin-left: 1px;
`;

const DockRule = styled.i`
    flex: none;
    width: 25px;
    height: 2px;
    margin: -2px 0;
    background: #cfd4da;
`;

/* ---- capture overlay ---- */

const Selection = styled.div`
    position: absolute;
    z-index: 5;
    top: 23px;
    left: 547px;
    width: 565px;
    height: 414px;
    border: 1px solid #12a4ea;
    box-shadow: 0 0 0 4000px rgba(0, 0, 0, 0.6);
`;

const Handle = styled.i`
    position: absolute;
    left: calc(${(p) => p.$x}% - 3px);
    top: calc(${(p) => p.$y}% - 3px);
    width: 6px;
    height: 6px;
    background: #12a4ea;
`;

const SizeTag = styled.div`
    position: absolute;
    bottom: calc(100% + 2px);
    left: -1px;
    height: 26px;
    background: #222;
    color: #fff;
    font-size: 16px;
    line-height: 22px;
    white-space: nowrap;
`;

const SnipBar = styled.div`
    position: absolute;
    top: calc(100% + 5px);
    right: 0;
    display: flex;
    align-items: center;
    height: 40px;
    padding: 0 14px 0 5px;
    background: #eaedf4;
    color: #16181f;
    border-radius: 2px;
    white-space: nowrap;
`;

const SnipButton = styled.button`
    position: relative;
    display: flex;
    align-items: center;
    height: 40px;
    padding: 0 7px;
    svg {
        fill: none;
        stroke: #303545;
        stroke-width: 1.5;
    }
    ${(p) => p.$dot && css`
        &::after {
            content: "";
            position: absolute;
            top: 7px;
            right: 3px;
            width: 6px;
            height: 6px;
            border-radius: 50%;
            background: #e0581c;
        }
    `}
`;

const SnipRule = styled.i`
    width: 1px;
    height: 18px;
    margin: 0 3px;
    background: #c4c7cf;
`;

/* ---- command line ---- */

const CommandArea = styled.section`
    display: flex;
    height: 151px;
    padding: 5px 0 5px;
`;

const CommandSide = styled.div`
    display: flex;
    flex-direction: column;
    align-items: center;
    gap: 12px;
    width: 31px;
    padding: 5px 4px 0 0;
    background: #2a3039;
`;

const CommandMain = styled.div`
    flex: 1;
    display: flex;
    flex-direction: column;
    color: #000;
`;

const History = styled.pre`
    flex: 1;
    margin: 0;
    padding: 20px 3px 0;
    background: #c8c8c8;
    border-bottom: 1px solid #222;
    font: 15px/19px "Liberation Mono", "Noto Sans CJK SC", monospace;
`;

const Han = styled.span`
    font-size: 16px;
    line-height: 18px;
`;

const Prompt = styled.label`
    display: flex;
    align-items: center;
    gap: 3px;
    height: 25px;
    padding-left: 5px;
    background: #f7f7f2;
    i { border-top-color: #555; }
    input {
        flex: 1;
        margin-left: 5px;
        font-size: 16px;
        font-style: italic;
        &::placeholder { color: #777; opacity: 1; }
    }
`;

const StatusRow = styled.footer`
    display: flex;
    align-items: center;
    height: 39px;
    padding: 0 0 5px 12px;
    background: #222933;
    border-bottom: 1px solid #262c36;
`;

const LayoutTab = styled.button`
    position: relative;
    height: 30px;
    padding: 0 14px;
    color: #c8cacd;
    ${(p) => p.$on ? css`
        padding: 0 21px 0 19px;
        margin-right: -4px;
        background: #3b4453;
        color: #fff;
        clip-path: polygon(11px 0, 100% 0, calc(100% - 11px) 100%, 0 100%);
    ` : css`
        &::after {
            content: "";
            position: absolute;
            top: 3px;
            right: -4px;
            width: 1px;
            height: 24px;
            background: #4a5360;
            transform: skewX(-20deg);
        }
        margin-right: 3px;
    `}
`;

const StatusTools = styled.div`
    display: flex;
    align-items: center;
    gap: 1px;
    height: 30px;
    margin-left: auto;
`;

const StatusText = styled.button`
    height: 30px;
    padding: 0 6px;
    width: ${(p) => p.$w || "auto"};
    background: #343c49;
    text-align: right;
`;

const StatusIcon = styled.button`
    display: flex;
    align-items: center;
    justify-content: center;
    width: ${(p) => (p.$arrow ? 19 : 30)}px;
    height: 30px;
    background: ${(p) => (p.$on ? "#4e80b4" : "#2c343f")};
`;

const Watermark = styled.div`
    position: absolute;
    z-index: 9;
    right: 52px;
    bottom: 46px;
    color: #fff;
    font: 55px/80px "Noto Sans CJK SC", sans-serif;
    text-shadow: 2px 4px 3px rgba(0, 0, 0, 0.6);
    white-space: nowrap;
    b {
        margin-right: 21px;
        font-size: 59px;
        font-weight: 500;
    }
`;

/* ---- task bar ---- */

const TaskBar = styled.footer`
    display: grid;
    grid-template-columns: 1fr auto 1fr;
    align-items: center;
    height: 61px;
    background: linear-gradient(90deg, #e2eaee, #dbe0ee 30%, #d6dae8 65%, #dfe7ec);
    color: #1c1c1c;
`;

const Weather = styled.button`
    display: flex;
    align-items: center;
    gap: 10px;
    padding-left: 26px;
    text-align: left;
    small {
        display: block;
        font-size: 15px;
        color: #444;
    }
`;

const AppList = styled.div`
    display: flex;
    align-items: center;
    gap: 7px;
`;

const AppButton = styled.button`
    display: flex;
    flex-direction: column;
    align-items: center;
    width: 48px;
    height: 48px;
    padding-top: 9px;
    border-radius: 6px;
    background: ${(p) => (p.$on ? "rgba(255,255,255,.5)" : "none")};
    i {
        width: ${(p) => (p.$on ? 18 : 8)}px;
        height: 4px;
        margin-top: 5px;
        border-radius: 2px;
        background: #8a8f9a;
    }
`;

const SearchPill = styled.button`
    display: flex;
    align-items: center;
    justify-content: center;
    gap: 7px;
    width: 122px;
    height: 38px;
    margin: 0 3px 0 2px;
    border-radius: 19px;
    background: #f3f5f8;
`;

const Tray = styled.div`
    display: flex;
    align-items: center;
    justify-content: flex-end;
    padding-right: 26px;
`;

const TrayButton = styled.button`
    display: flex;
    justify-content: center;
    width: ${(p) => p.$w}px;
`;

const Clock = styled.button`
    margin: 0 7px 0 12px;
    line-height: 20px;
    text-align: right;
`;

const Badge = styled.i`
    width: 19px;
    height: 19px;
    border-radius: 50%;
    background: #b2b5ba;
    color: #eee;
    font-size: 13px;
    font-style: normal;
    line-height: 19px;
    text-align: center;
`;

const menus = ["文件(F)", "编辑(E)", "视图(V)", "插入(I)", "格式(O)", "工具(T)", "绘图(D)", "标注(N)", "修改(M)", "参数(P)", "燕秀工具箱2.88(Y)", "Express", "窗口(W)", "帮助(H)"];
const tabs = ["默认", "插入", "注释", "参数化", "视图", "管理", "输出", "附加模块", "协作", "精选应用", "Express Tools"];
const quick = ["newFile", "open", "save", "saveAs", "fromMobile", "toMobile", "print", "undo"];

const toolRow1 = [
    ["jian", "yin", "ding", "layers", "colors", "dimDown"],
    ["dimH", "dimA", "dimR", "dimV", "dimB"],
    ["ku", "grid", "su", "cross", "pins", "arcs", "swap", "calcT", "ci"],
    ["rot", "quad", "slash", "cloud", "corner2", "corner"],
];
const toolRow2 = ["cross", "bars", "dash2", "ten", "aa", "peak", "zig", "waves", "yell", "cyan", "chev", "rays", "tri", "rk", "rk2", "chang", "hook", "arc3", "walls", "back", "box", "hash", "midH", "midV", "wallTo"];
const flat = {
    ln: <><P d="M1 18L18 1" /><F d="M20 15v5h-5z" /></>,
    er: <><P c={Y} w={5} d="M19 1L8 13" /><F c={R} d="M5 11l5 4-4 4-4-2z" /><P d="M0 19h20" c="#888" /></>,
    node: <><P d="M1 8h3v4H1zM4 10h10M14 7h5v6h-5z" /><F d="M20 16v4h-4z" /></>,
    blk: <><P d="M2 1h16v17H2z" /><circle cx="14" cy="14" r="3" fill="#3b4453" stroke={W} /><F d="M20 16v4h-4z" /></>,
};

// "-" is a rule, "=" starts the next docked toolbar
const dockA = ["sys", "cells", "cells2", "-", "face", "zhongE", "mmcm", "doc", "-", "az", "az2", "-", "ask", "disk", "roof", "plan", "=", "crossP", "cross4", "-", "band", "scis", "upDown"];
const dockB = ["doorWand", "door", "winWand", "win", "bayRed", "open", "-", "doorWand", "door", "doorRed", "-", "winWand", "win", "bayRed", "-", "bent", "bentRed", "-", "sill", "ceil", "-", "winRed", "winNext"];

const taskApps = [
    ["views", 0], ["terminal", 0], ["chrome", 1], ["edge", 0], ["firefox", 0], ["flash", 0], ["folder", 1], ["store", 0],
    ["bird", 0], ["wechat", 1], ["excel", 1], ["pycharm", 1], ["word", 1], ["rocket", 1],
];

const trayItems = [["up", 30], ["qq", 30], ["keyboard", 40], ["ime", 40], ["qApp", 52], ["wifi", 34], ["volume", 30], ["battery", 34]];

const statusItems = ["grid*", "snap", "v", "|", "ortho", "polar", "v", "iso", "v", "|", "track*", "osnap*", "v", "weight", "|", "person*", "person", "star", "1:1", "v", "gear", "v", "plus", "angle", "disc*", "full", "menu"];

const Big = ({ icon, label, w, caret }) => (
    <BigButton $w={w}>
        <Svg set={large} name={icon} size={40} box={41} />
        {label.split("\n").map((t) => <span key={t}>{t}</span>)}
        {caret && <Caret />}
    </BigButton>
);

const Small = ({ icon, label, caret }) => (
    <SmallButton aria-label={label || icon} $bare={!label}>
        <Svg set={small} name={icon} />
        {label}
        {caret && <Caret />}
    </SmallButton>
);

const Panel = ({ size, title, pad, caret = true, launcher, children }) => (
    <PanelBox $size={size}>
        <PanelBody $pad={pad}>{children}</PanelBody>
        <PanelTitle>
            {title}
            {caret && <Caret $big />}
            {launcher && <svg width="8" height="8" viewBox="0 0 8 8"><P d="M1 1l6 6M7 2v5H2" /></svg>}
        </PanelTitle>
    </PanelBox>
);

const Dock = ({ items, set }) => (
    <DockCol>
        <Grip $flat />
        {items.map((name, i) => {
            if (name === "-") return <DockRule key={i} />;
            if (name === "=") return <Grip $flat key={i} />;
            return <Tile key={i} aria-label={name}><Svg set={set} name={name} /></Tile>;
        })}
    </DockCol>
);

const PropCombo = ({ label, line }) => (
    <Combo $w={224}>
        {line ? <Stroke /> : <Swatch />}
        <select aria-label={label}><option>ByLayer</option></select>
        <Caret $big />
    </Combo>
);

const WinIcon = ({ d }) => <svg width="16" height="16" viewBox="0 0 16 16"><P d={d} w={1.6} /></svg>;

const Header = () => (
    <>
        <TitleBar>
            <Logo><b>A</b>CAD</Logo>
            <QuickBar>
                {quick.map((name) => <IconButton key={name} aria-label={name}><Svg set={small} name={name} /></IconButton>)}
                <Caret />
                <IconButton aria-label="redo"><Svg set={small} name="redo" /></IconButton>
                <Caret />
                <Caret $big />
                <ShareButton><Svg set={small} name="plane" />共享</ShareButton>
            </QuickBar>
            <WindowTitle>Autodesk AutoCAD 2023    Drawing1.dwg</WindowTitle>
            <TitleRight>
                <SearchGroup>
                    <svg width="5" height="12" viewBox="0 0 5 12"><F d="M0 0l5 6-5 6z" /></svg>
                    <HelpSearch aria-label="搜索" placeholder="键入关键字或短语" />
                    <Svg set={small} name="search" />
                </SearchGroup>
                <Account><Svg set={small} name="person" />1589575776</Account>
                <Caret />
                <IconButton aria-label="cart"><Svg set={small} name="cart" /></IconButton>
                <IconButton aria-label="apps"><Svg set={small} name="autodeskA" /></IconButton>
                <Caret />
                <Rule />
                <IconButton aria-label="help"><Svg set={small} name="help" /></IconButton>
                <Caret />
            </TitleRight>
            <WinButtons $gap={15}>
                <span />
                <IconButton aria-label="minimize"><WinIcon d="M4 13h9M4 12h9" /></IconButton>
                <IconButton aria-label="maximize"><WinIcon d="M1 2h14v12H1z" /></IconButton>
                <IconButton aria-label="close"><WinIcon d="M1 1l14 14M15 1L1 15" /></IconButton>
            </WinButtons>
        </TitleBar>
        <MenuBar>
            {menus.map((m) => <button key={m}>{m}</button>)}
            <ExtraMenus>
                <button>谜你工具</button>
                <button>源泉设计</button>
            </ExtraMenus>
            <WinButtons $gap={6}>
                <IconButton aria-label="minimize"><WinIcon d="M3 13h9M3 12h9" /></IconButton>
                <IconButton aria-label="restore"><WinIcon d="M1 6h10v8H1zM5 6V1h10v8h-4" /></IconButton>
                <IconButton aria-label="close"><WinIcon d="M1 1l14 14M15 1L1 15" /></IconButton>
            </WinButtons>
        </MenuBar>
        <RibbonTabs>
            {tabs.map((t, i) => <RibbonTab key={t} $on={i === 0}>{t}</RibbonTab>)}
            <RibbonToggle aria-label="ribbon">
                <i><svg width="6" height="4" viewBox="0 0 6 4"><F c="#222933" d="M0 4l3-4 3 4z" /></svg></i>
                <Caret />
            </RibbonToggle>
        </RibbonTabs>
    </>
);

const RibbonPanels = () => (
    <Ribbon>
        <Panel size={265} title="绘图" pad={2}>
            <Big icon="line" label="直线" />
            <Big icon="pline" label="多段线" w={50} />
            <Big icon="circle" label="圆" w={50} caret />
            <Big icon="arc" label="圆弧" caret />
            <Col $w={52} $pad={8}>
                {["rect", "ellipse", "hatch"].map((n) => <Small key={n} icon={n} caret />)}
            </Col>
        </Panel>
        <Panel size={283} title="修改" pad={7}>
            <Col $w={75}>
                <Small icon="move" label="移动" />
                <Small icon="copy" label="复制" />
                <Small icon="stretch" label="拉伸" />
            </Col>
            <Col $w={75}>
                <Small icon="rotate" label="旋转" />
                <Small icon="mirror" label="镜像" />
                <Small icon="scale" label="缩放" />
            </Col>
            <Col $w={92}>
                <Small icon="trim" label="修剪" caret />
                <Small icon="fillet" label="圆角" caret />
                <Small icon="array" label="阵列" caret />
            </Col>
            <Col $w={30}>
                <Small icon="erase" />
                <Small icon="explode" />
                <Small icon="offset" />
            </Col>
        </Panel>
        <Panel size={196} title="注释" pad={7}>
            <Big icon="text" label="文字" caret />
            <Big icon="dim" label="标注" />
            <Col $w={84} $pad={2}>
                <Small icon="linear" label="线性" caret />
                <Small icon="leader" label="引线" caret />
                <Small icon="table" label="表格" />
            </Col>
        </Panel>
        <Panel size={315} title="图层" pad={2}>
            <Big icon="layerProps" label={"图层\n特性"} />
            <Col $w={258}>
                <Combo $w={258}>
                    <Svg set={small} name="bulb" size={18} />
                    <Svg set={small} name="sun" size={18} />
                    <Svg set={small} name="unlock" size={18} />
                    <Swatch />
                    <select aria-label="图层"><option>0</option></select>
                    <Caret $big />
                </Combo>
                <Line>
                    {["layOff", "layIso", "layFreeze", "layLock"].map((n) => <Small key={n} icon={n} />)}
                    <Small icon="layCurrent" label="置为当前" />
                </Line>
                <Line>
                    {["layOn", "layUniso", "layThaw", "layUnlock"].map((n) => <Small key={n} icon={n} />)}
                    <Small icon="layMatch" label="匹配图层" />
                </Line>
            </Col>
        </Panel>
        <Panel size={168} title="块" pad={2}>
            <Big icon="insert" label="插入" caret />
            <Col $w={110} $pad={3}>
                <Small icon="blkNew" label="创建" />
                <Small icon="blkEdit" label="编辑" />
                <Small icon="attEdit" label="编辑属性" caret />
            </Col>
        </Panel>
        <Panel size={306} title="特性" pad={2} launcher>
            <Big icon="matchProps" label={"特性\n匹配"} />
            <Col $w={25}>
                <Small icon="wheel" />
                <Small icon="weights" />
                <Small icon="types" />
            </Col>
            <Col $w={224}>
                <PropCombo label="颜色" />
                <PropCombo label="线宽" line />
                <PropCombo label="线型" line />
            </Col>
        </Panel>
        <Panel size={84} title="组" pad={2}>
            <Big icon="group" label="组" w={50} />
            <Col $w={29}>
                <PickButton aria-label="ungroup"><Svg set={small} name="ungroup" /></PickButton>
                <PickButton aria-label="edit group"><Svg set={small} name="groupEdit" /></PickButton>
                <PickButton $on aria-label="group selection"><Svg set={small} name="groupSel" /></PickButton>
            </Col>
        </Panel>
        <Panel size={95} title="实用工具" pad={7}>
            <Big icon="ruler" label="测量" caret />
            <Col $w={30} $pad={8}>
                {["quickSel", "selAll", "calc"].map((n) => <Small key={n} icon={n} />)}
            </Col>
        </Panel>
        <Panel size={109} title="剪贴板" pad={7} caret={false}>
            <Big icon="paste" label="粘贴" caret />
            <Col $w={46} $pad={8}>
                <Small icon="cut" caret />
                <Small icon="copyClip" caret />
            </Col>
        </Panel>
        <Panel size={86} title="视图" pad={13} launcher>
            <Big icon="base" label="基点" caret />
        </Panel>
    </Ribbon>
);

const Toolbars = () => (
    <ToolArea>
        <ToolRow>
            {toolRow1.map((group, i) => (
                <ToolGroup key={i}>
                    <Grip />
                    {group.map((n) => <Tile key={n} aria-label={n}><Svg set={tile} name={n} /></Tile>)}
                </ToolGroup>
            ))}
            <ToolGroup>
                <Grip />
                {Object.keys(flat).map((n) => <Tile key={n} $plain aria-label={n}><Svg set={flat} name={n} /></Tile>)}
            </ToolGroup>
        </ToolRow>
        <ToolRow>
            <ToolGroup>
                <Grip />
                {toolRow2.map((n) => <Tile key={n} aria-label={n}><Svg set={tile} name={n} /></Tile>)}
            </ToolGroup>
        </ToolRow>
    </ToolArea>
);

const Drawing = () => (
    <Sketch>
        <g fill="none" strokeWidth="1" shapeRendering="crispEdges">
            <path d="M642.500 0V400" stroke="#3f9a55" />
            <path d="M642.500 400V700M0 400.500H642" stroke="#888" />
            <path d="M642 400.500H4000" stroke="#a84848" />
            <path d="M1564.500 0V700" stroke="#bbb" />
            <path d="M412 171.500H509M460.500 123V220M457.500 168.500h6v6h-6z" stroke="#000" />
            <path d="M637.500 395.500h11v11h-11zM642.500 400V339M642 401.500H705" stroke="#000" />
        </g>
        <path d="M644 320l7 8 7-8M651 328v8M709 385l15 15M724 385l-15 15" fill="none" stroke="#222" />
        <path d="M734 308L919 124" stroke="#b9cdf5" strokeWidth="5" />
        <path d="M734 308L919 124" stroke="#061340" strokeWidth="1.5" />
        <g fill="#0a7df0" stroke="#143a66">
            <rect x="728.500" y="302.500" width="12" height="12" />
            <rect x="821.500" y="210.500" width="12" height="12" />
            <rect x="913.500" y="118.500" width="12" height="12" />
            <path d="M749 325.500h19v2h-19zM751 330.500h15l-7.500 15z" />
        </g>
        <path d="M729 308.500h11M734.500 303v11" stroke="#8cc8e8" />
    </Sketch>
);

const navIcon = (
    <svg width="30" height="240" viewBox="0 0 30 240" fill="none" stroke="#d8d8d8" strokeWidth="2">
        <circle cx="15" cy="25" r="13" />
        <circle cx="15" cy="25" r="6" />
        <path d="M0 58h30" />
        <path d="M9 92q-6-8-8-13 4-1 7 4V68q3-2 4 8V64q3-2 4 11V66q3-1 4 11v-7q4 0 3 14l-3 9z" />
        <path d="M2 100l22 20M24 98L2 120M20 118a5 5 0 1 1 5 6l4 5" />
        <path d="M15 146v30M11 150l4-5 4 5M11 172l4 5 4-5M1 161q14 9 28 0" />
        <path d="M0 192h30M1 197h28v8H1zM1 209h20v17H1zM9 214l6 4-6 4z" />
    </svg>
);

const CaptureOverlay = () => (
    <Selection>
        <SizeTag>565 × 414</SizeTag>
        {[[0, 0], [50, 0], [100, 0], [0, 50], [100, 50], [0, 100], [50, 100], [100, 100]].map(([x, y]) => (
            <Handle key={`${x}-${y}`} $x={x} $y={y} />
        ))}
        <SnipBar role="toolbar">
            {["rect", "oval", "arrow", "pencil", "mosaic", "text", "number"].map((n) => (
                <SnipButton key={n} aria-label={n} $dot={n === "number"}>
                    <Svg set={snip} name={n} size={21} box={24} />
                </SnipButton>
            ))}
            <SnipRule />
            {["undo", "cut", "translate", "ocr", "pin", "record", "save", "phone", "mark"].map((n) => (
                <SnipButton key={n} aria-label={n} $dot={n === "translate"}>
                    <Svg set={snip} name={n} size={21} box={24} />
                </SnipButton>
            ))}
            <SnipRule />
            <SnipButton aria-label="close"><Svg set={snip} name="close" size={21} box={24} /></SnipButton>
            <SnipButton aria-label="done"><Svg set={snip} name="done" size={21} box={24} /></SnipButton>
            <span>完成</span>
        </SnipBar>
    </Selection>
);

const CommandLine = () => (
    <CommandArea>
        <CommandSide>
            <Grip $flat />
            <svg width="12" height="12" viewBox="0 0 12 12"><P d="M1 1l10 10M11 1L1 11" w={3} /></svg>
            <svg width="20" height="20" viewBox="0 0 20 20"><P w={3} d="M1 19L12 8" /><P w={3} d="M14 1q-5 2-3 6 3 4 8-1" /></svg>
        </CommandSide>
        <CommandMain>
            <History>
                <Han>命令</Han>: (alert "<Han>这条抛物线已经画好了，用得是样条曲线，命令：</Han>_SPLINE{"\n"}
                {'("_>\n'}
                {'("_> CAD'}<Han>插件定制开发可关注（批量化、自动化）</Han>{'")\n'}
                {"nil\n"}
                <Han>命令</Han>:
            </History>
            <Prompt>
                <svg width="20" height="16" viewBox="0 0 20 16"><P c="#555" d="M.5.5h19v15H.5zM3 7l3 2-3 2M7 12h4" /><F c="#555" d="M0 0h20v4H0z" /></svg>
                <Caret $big />
                <input placeholder="键入命令" />
            </Prompt>
        </CommandMain>
    </CommandArea>
);

const StatusBar = () => (
    <StatusRow>
        <LayoutTab $on>模型</LayoutTab>
        <LayoutTab>布局1</LayoutTab>
        <LayoutTab>布局2</LayoutTab>
        <LayoutTab aria-label="new layout"><WinIcon d="M8 0v16M0 8h16" /></LayoutTab>
        <StatusTools>
            <StatusText>燕秀字高=2.5</StatusText>
            <StatusText $w="188px">-1.9847, 2.4866, 0.0000</StatusText>
            <span />
            <StatusText>模型</StatusText>
            {statusItems.map((item, i) => {
                const name = item.replace("*", "");
                if (item === "|") return <span key={i} />;
                return (
                    <StatusIcon key={i} $on={item !== name} $arrow={item === "v"} aria-label={name}>
                        {item === "v" ? <Caret $big /> : item === "1:1" ? "1:1" : <Svg set={status} name={name} />}
                    </StatusIcon>
                );
            })}
        </StatusTools>
    </StatusRow>
);

const App = () => {
    return (
        <>
            <GlobalStyle />
            <Desktop>
                <AppWindow>
                    <Header />
                    <RibbonPanels />
                    <Toolbars />
                    <Workspace>
                        <Canvas>
                            <Drawing />
                            <ViewLabel>[−][俯视][二维线框]</ViewLabel>
                            <ViewCube>
                                <span>北</span>
                                <span>西</span>
                                <CubeFace>上</CubeFace>
                                <span>东</span>
                                <span>南</span>
                                <Wcs>WCS<Caret $big /></Wcs>
                            </ViewCube>
                            <NavBar>{navIcon}</NavBar>
                            <CaptureOverlay />
                        </Canvas>
                        <Dock items={dockA} set={tile} />
                        <Dock items={dockB} set={dock} />
                    </Workspace>
                    <CommandLine />
                    <StatusBar />
                </AppWindow>
                <TaskBar>
                    <Weather>
                        <Svg set={apps} name="weather" size={30} box={30} />
                        <span>28°C<small>局部晴朗</small></span>
                    </Weather>
                    <AppList>
                        <AppButton aria-label="start"><Svg set={apps} name="start" size={30} box={30} /></AppButton>
                        <SearchPill><Svg set={apps} name="search" size={18} box={30} />搜索</SearchPill>
                        {taskApps.map(([name, running]) => (
                            <AppButton key={name} aria-label={name}>
                                <Svg set={apps} name={name} size={30} box={30} />
                                {running ? <i /> : null}
                            </AppButton>
                        ))}
                        <AppButton $on aria-label="AutoCAD"><Svg set={apps} name="acad" size={30} box={30} /><i /></AppButton>
                    </AppList>
                    <Tray>
                        {trayItems.map(([name, w]) => (
                            <TrayButton key={name} $w={w} aria-label={name}>
                                <Svg set={apps} name={name} size={20} box={30} />
                            </TrayButton>
                        ))}
                        <Clock>16:42<br />2023/9/10</Clock>
                        <Badge>2</Badge>
                    </Tray>
                </TaskBar>
            </Desktop>
            <Watermark><b>知乎</b>@know634</Watermark>
        </>
    );
};

export default App;
